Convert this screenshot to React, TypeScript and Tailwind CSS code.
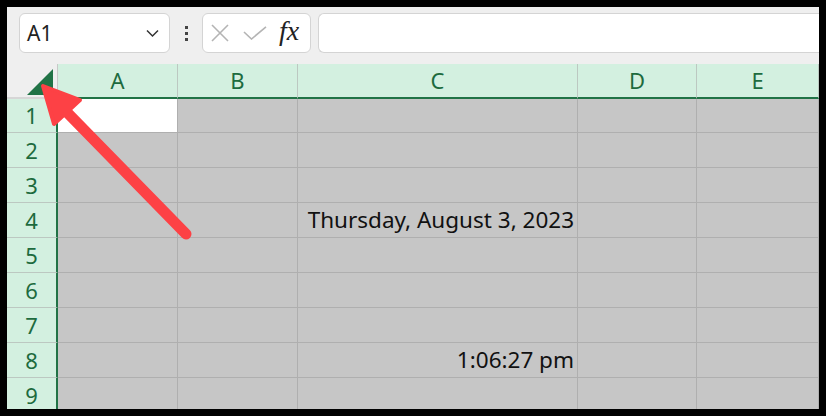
import React from "react";

const cols = [
  { l: "A", w: 120 },
  { l: "B", w: 120 },
  { l: "C", w: 280 },
  { l: "D", w: 119 },
  { l: "E", w: 122 },
];

const rows = [1, 2, 3, 4, 5, 6, 7, 8, 9];

export default function App() {
  const font = { fontFamily: '"Noto Sans", "Open Sans", sans-serif' };
  return (
    <div className="relative w-[826px] h-[416px] bg-black p-[7px] overflow-hidden" style={font}>
      <div className="flex flex-col w-[812px] h-[402px] bg-[#c6c6c6] overflow-hidden">
        {/* toolbar */}
        <div className="flex items-start h-[57px] shrink-0 bg-[#efefef] pt-[6px] pl-[12px]">
          <div className="flex items-center justify-between w-[151px] h-[40px] bg-white border border-[#d4d4d4] rounded-[6px] pl-[7px] pr-[10px]">
            <span className="text-[21px] text-[#222] leading-none">A1</span>
            <svg width="13" height="9" viewBox="0 0 13 9">
              <path d="M1 1.5 L6.5 7 L12 1.5" fill="none" stroke="#333" strokeWidth="1.5" />
            </svg>
          </div>
          <div className="flex flex-col items-center justify-center gap-[3px] w-[32px] h-[40px]">
            <div className="w-[3px] h-[3px] bg-[#444]" />
            <div className="w-[3px] h-[3px] bg-[#444]" />
            <div className="w-[3px] h-[3px] bg-[#444]" />
          </div>
          <div className="flex items-center w-[109px] h-[40px] bg-white border border-[#d4d4d4] rounded-[6px] pl-[8px] gap-[14px]">
            <svg width="18" height="18" viewBox="0 0 18 18">
              <path d="M1 1 L17 17 M17 1 L1 17" stroke="#b4b4b4" strokeWidth="1.6" fill="none" />
            </svg>
            <svg width="24" height="14" viewBox="0 0 24 14">
              <path d="M1 6 L8.5 13 L23 0.8" stroke="#b4b4b4" strokeWidth="1.6" fill="none" />
            </svg>
            <span
              className="text-[28px] italic font-normal leading-none text-[#222] -mt-[4px] -ml-[2px]"
              style={{ fontFamily: '"Liberation Serif", "DejaVu Serif", serif' }}
            >
              fx
            </span>
          </div>
          <div className="ml-[7px] flex-1 h-[40px] bg-white border border-r-0 border-[#d4d4d4] rounded-l-[6px]" />
        </div>

        {/* column header */}
        <div className="flex h-[35px] shrink-0">
          <div className="relative w-[51px] shrink-0 bg-[#efefef] border-r border-[#c8c8c8] border-b-2 border-b-[#d6d6d6]">
            <svg className="absolute right-[4px] bottom-[2px]" width="26" height="26" viewBox="0 0 26 26">
              <path d="M0 26 L26 0 L26 26 Z" fill="#217346" />
            </svg>
          </div>
          {cols.map((c) => (
            <div
              key={c.l}
              className="flex items-center justify-center shrink-0 bg-[#d3f0e0] border-r border-[#bcc8c1] border-b-2 border-b-[#217346] text-[22px] text-[#1d6b3e]"
              style={{ width: c.w }}
            >
              {c.l}
            </div>
          ))}
        </div>

        {/* rows */}
        <div className="flex flex-col">
          {rows.map((r) => (
            <div key={r} className={`flex shrink-0 ${r === 1 ? "h-[34px]" : "h-[35px]"}`}>
              <div className="flex items-center justify-center w-[51px] shrink-0 bg-[#d3f0e0] border-r-2 border-[#217346] border-b border-b-[#bcc8c1] text-[22px] text-[#1d6b3e]">
                {r}
              </div>
              {cols.map((c) => {
                const isA1 = r === 1 && c.l === "A";
                let txt = "";
                if (c.l === "C" && r === 4) txt = "Thursday, August 3, 2023";
                if (c.l === "C" && r === 8) txt = "1:06:27 pm";
                return (
                  <div
                    key={c.l}
                    className={`flex items-end justify-end pr-[3px] pb-[1px] leading-[32px] shrink-0 border-r border-b border-[#afafaf] text-[22.5px] text-[#111] whitespace-nowrap ${
                      isA1 ? "bg-white" : "bg-[#c6c6c6]"
                    }`}
                    style={{ width: c.w }}
                  >
                    {txt}
                  </div>
                );
              })}
            </div>
          ))}
        </div>
      </div>

      {/* red arrow */}
      <svg className="absolute left-0 top-0" width="826" height="416" viewBox="0 0 826 416">
        <line x1="186" y1="234" x2="52" y2="97" stroke="#fd4145" strokeWidth="11" strokeLinecap="round" />
        <path d="M43 86 L80 100 L54 124 Z" fill="#fd4145" stroke="#fd4145" strokeWidth="4" strokeLinejoin="round" />
      </svg>
    </div>
  );
}
